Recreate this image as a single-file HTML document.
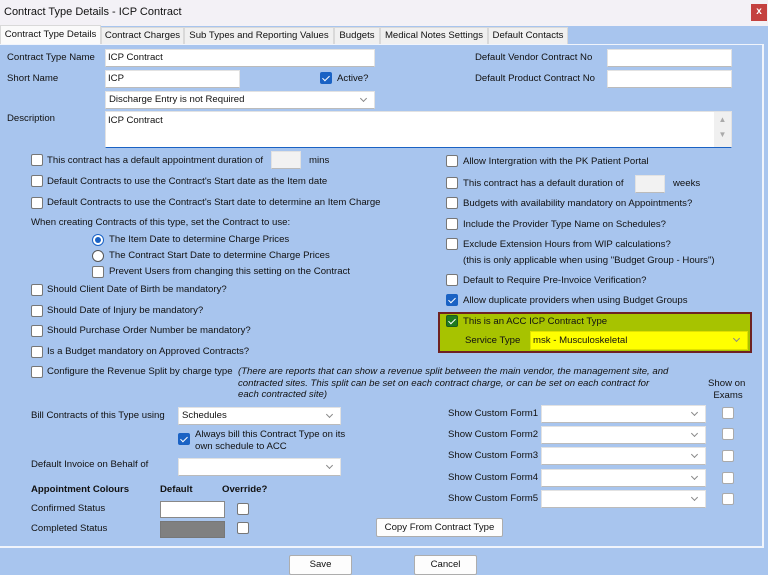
<!DOCTYPE html>
<html><head><meta charset="utf-8"><style>
*{box-sizing:border-box;margin:0;padding:0}
body{width:768px;height:575px;overflow:hidden;background:#a8c5ee;font-family:"Liberation Sans",sans-serif;font-size:9.6px;color:#111;position:relative}
.a{position:absolute;white-space:nowrap;line-height:12px}
.in{position:absolute;background:#fff;border:1px solid #e2e2e2;border-bottom:1px solid #bbb}
.cb{position:absolute;width:12px;height:12px;background:#fff;border:1px solid #777;border-radius:2px}
.ck{background:#1a62c4;border-color:#1a62c4}
.ck:after{content:"";position:absolute;left:3px;top:1px;width:3px;height:6px;border:solid #fff;border-width:0 1.3px 1.3px 0;transform:rotate(45deg)}
.rd{position:absolute;width:12px;height:12px;background:#fff;border:1px solid #555;border-radius:50%}
.rd.on{border-color:#1a62c4}
.rd.on:after{content:"";position:absolute;left:2px;top:2px;width:6px;height:6px;border-radius:50%;background:#1a62c4}
.cmb:after{content:"";position:absolute;right:8px;top:4px;width:4px;height:4px;border:solid #888;border-width:0 1px 1px 0;transform:rotate(45deg)}
.btn{position:absolute;background:#fdfdfd;border:1px solid #adadad;border-radius:2px;text-align:center;line-height:17px}
.tab{position:absolute;top:27px;height:17px;line-height:16px;background:#f0f0f0;border:1px solid #d9d9d9;border-bottom:none;white-space:nowrap;text-align:center;overflow:hidden}
.i{font-style:italic}
</style></head><body>
<div class="a" style="left:0;top:0;width:768px;height:26px;background:#f3f1f6"></div>
<div class="a" style="left:4px;top:6px;font-size:11px">Contract Type Details - ICP Contract</div>
<div class="a" style="left:751px;top:4px;width:16px;height:17px;background:#c4413f;color:#fff;text-align:center;line-height:16px;font-size:10px;font-weight:bold">x</div>
<div class="tab" style="left:0;width:101px;top:25px;height:20px;background:#fafafa;line-height:18px">Contract Type Details</div>
<div class="tab" style="left:101px;width:83px">Contract Charges</div>
<div class="tab" style="left:184px;width:150px">Sub Types and Reporting Values</div>
<div class="tab" style="left:334px;width:46px">Budgets</div>
<div class="tab" style="left:380px;width:108px">Medical Notes Settings</div>
<div class="tab" style="left:488px;width:80px">Default Contacts</div>
<div class="a" style="left:0;top:44px;width:764px;height:504px;border-right:2px solid #f0f4fb;border-bottom:2px solid #f0f4fb;border-top:1px solid #f0f4fb"></div>

<div class="a" style="left:7px;top:52px">Contract Type Name</div>
<div class="in" style="left:105px;top:49px;width:270px;height:18px"></div><div class="a" style="left:108px;top:52px">ICP Contract</div>
<div class="a" style="left:7px;top:73px">Short Name</div>
<div class="in" style="left:105px;top:70px;width:135px;height:18px"></div><div class="a" style="left:108px;top:73px">ICP</div>
<div class="cb ck" style="left:320px;top:72px"></div><div class="a" style="left:337px;top:73px">Active?</div>
<div class="in cmb" style="left:105px;top:91px;width:270px;height:18px"></div><div class="a" style="left:109px;top:94px">Discharge Entry is not Required</div>
<div class="a" style="left:7px;top:113px">Description</div>
<div class="in" style="left:105px;top:111px;width:627px;height:37px;border-bottom:1px solid #1a62c4"></div><div class="a" style="left:108px;top:115px">ICP Contract</div>
<div class="a" style="left:714px;top:112px;width:17px;height:35px;background:#f0f0f0;color:#aaa;font-size:8px;text-align:center;line-height:15px">▲<br>▼</div>
<div class="a" style="left:475px;top:52px">Default Vendor Contract No</div>
<div class="in" style="left:607px;top:49px;width:125px;height:18px"></div>
<div class="a" style="left:475px;top:73px">Default Product Contract No</div>
<div class="in" style="left:607px;top:70px;width:125px;height:18px"></div>

<div class="cb" style="left:31px;top:154px"></div><div class="a" style="left:47px;top:155px">This contract has a default appointment duration of</div>
<div class="in" style="left:271px;top:151px;width:30px;height:18px;background:#f2f2f2"></div><div class="a" style="left:309px;top:155px">mins</div>
<div class="cb" style="left:31px;top:175px"></div><div class="a" style="left:47px;top:176px">Default Contracts to use the Contract's Start date as the Item date</div>
<div class="cb" style="left:31px;top:197px"></div><div class="a" style="left:47px;top:197px">Default Contracts to use the Contract's Start date to determine an Item Charge</div>
<div class="a" style="left:31px;top:217px">When creating Contracts of this type, set the Contract to use:</div>
<div class="rd on" style="left:92px;top:234px"></div><div class="a" style="left:109px;top:234px">The Item Date to determine Charge Prices</div>
<div class="rd" style="left:92px;top:250px"></div><div class="a" style="left:109px;top:250px">The Contract Start Date to determine Charge Prices</div>
<div class="cb" style="left:92px;top:266px"></div><div class="a" style="left:109px;top:266px">Prevent Users from changing this setting on the Contract</div>
<div class="cb" style="left:31px;top:284px"></div><div class="a" style="left:47px;top:284px">Should Client Date of Birth be mandatory?</div>
<div class="cb" style="left:31px;top:305px"></div><div class="a" style="left:47px;top:305px">Should Date of Injury be mandatory?</div>
<div class="cb" style="left:31px;top:325px"></div><div class="a" style="left:47px;top:325px">Should Purchase Order Number be mandatory?</div>
<div class="cb" style="left:31px;top:346px"></div><div class="a" style="left:47px;top:346px">Is a Budget mandatory on Approved Contracts?</div>
<div class="cb" style="left:31px;top:366px"></div><div class="a" style="left:47px;top:366px">Configure the Revenue Split by charge type</div>
<div class="a i" style="left:238px;top:366px;line-height:11.5px">(There are reports that can show a revenue split between the main vendor, the management site, and<br>contracted sites. This split can be set on each contract charge, or can be set on each contract for<br>each contracted site)</div>

<div class="cb" style="left:446px;top:155px"></div><div class="a" style="left:463px;top:156px">Allow Intergration with the PK Patient Portal</div>
<div class="cb" style="left:446px;top:177px"></div><div class="a" style="left:463px;top:178px">This contract has a default duration of</div>
<div class="in" style="left:635px;top:175px;width:30px;height:18px;background:#f2f2f2"></div><div class="a" style="left:673px;top:178px">weeks</div>
<div class="cb" style="left:446px;top:197px"></div><div class="a" style="left:463px;top:198px">Budgets with availability mandatory on Appointments?</div>
<div class="cb" style="left:446px;top:218px"></div><div class="a" style="left:463px;top:219px">Include the Provider Type Name on Schedules?</div>
<div class="cb" style="left:446px;top:238px"></div><div class="a" style="left:463px;top:239px">Exclude Extension Hours from WIP calculations?</div>
<div class="a" style="left:463px;top:255px">(this is only applicable when using "Budget Group - Hours")</div>
<div class="cb" style="left:446px;top:274px"></div><div class="a" style="left:463px;top:275px">Default to Require Pre-Invoice Verification?</div>
<div class="cb ck" style="left:446px;top:294px"></div><div class="a" style="left:463px;top:295px">Allow duplicate providers when using Budget Groups</div>
<div class="a" style="left:438px;top:312px;width:314px;height:41px;background:#a7c300;border:2px solid #6e2222"></div>
<div class="cb ck" style="left:446px;top:315px;background:#1f7a1f;border-color:#1f5a1f"></div><div class="a" style="left:463px;top:316px">This is an ACC ICP Contract Type</div>
<div class="a" style="left:465px;top:335px">Service Type</div>
<div class="in cmb" style="left:530px;top:331px;width:218px;height:19px;background:#ffff00;border-color:#e0e000"></div><div class="a" style="left:533px;top:335px">msk - Musculoskeletal</div>

<div class="a" style="left:708px;top:378px;text-align:center;line-height:12px">Show on<br>&nbsp;Exams</div>
<div class="a" style="left:448px;top:408px">Show Custom Form1</div><div class="in cmb" style="left:541px;top:405px;width:165px;height:18px"></div><div class="cb" style="left:722px;top:407px;border-color:#aaa"></div>
<div class="a" style="left:448px;top:429px">Show Custom Form2</div><div class="in cmb" style="left:541px;top:426px;width:165px;height:18px"></div><div class="cb" style="left:722px;top:428px;border-color:#aaa"></div>
<div class="a" style="left:448px;top:450px">Show Custom Form3</div><div class="in cmb" style="left:541px;top:447px;width:165px;height:18px"></div><div class="cb" style="left:722px;top:450px;border-color:#aaa"></div>
<div class="a" style="left:448px;top:472px">Show Custom Form4</div><div class="in cmb" style="left:541px;top:469px;width:165px;height:18px"></div><div class="cb" style="left:722px;top:472px;border-color:#aaa"></div>
<div class="a" style="left:448px;top:493px">Show Custom Form5</div><div class="in cmb" style="left:541px;top:490px;width:165px;height:18px"></div><div class="cb" style="left:722px;top:493px;border-color:#aaa"></div>

<div class="a" style="left:31px;top:410px">Bill Contracts of this Type using</div>
<div class="in cmb" style="left:178px;top:407px;width:163px;height:18px"></div><div class="a" style="left:182px;top:410px">Schedules</div>
<div class="cb ck" style="left:178px;top:433px"></div><div class="a" style="left:195px;top:429px;line-height:11.5px">Always bill this Contract Type on its<br>own schedule to ACC</div>
<div class="a" style="left:31px;top:459px">Default Invoice on Behalf of</div>
<div class="in cmb" style="left:178px;top:458px;width:163px;height:18px"></div>
<div class="a" style="left:31px;top:484px;font-weight:bold">Appointment Colours</div>
<div class="a" style="left:160px;top:484px;font-weight:bold">Default</div>
<div class="a" style="left:222px;top:484px;font-weight:bold">Override?</div>
<div class="a" style="left:31px;top:503px">Confirmed Status</div>
<div class="a" style="left:160px;top:501px;width:65px;height:17px;background:#fff;border:1px solid #888"></div>
<div class="cb" style="left:237px;top:503px"></div>
<div class="a" style="left:31px;top:523px">Completed Status</div>
<div class="a" style="left:160px;top:521px;width:65px;height:17px;background:#808080;border:1px solid #777"></div>
<div class="cb" style="left:237px;top:522px"></div>
<div class="btn" style="left:376px;top:518px;width:127px;height:19px">Copy From Contract Type</div>
<div class="btn" style="left:289px;top:555px;width:63px;height:20px">Save</div>
<div class="btn" style="left:414px;top:555px;width:63px;height:20px">Cancel</div>
</body></html>
